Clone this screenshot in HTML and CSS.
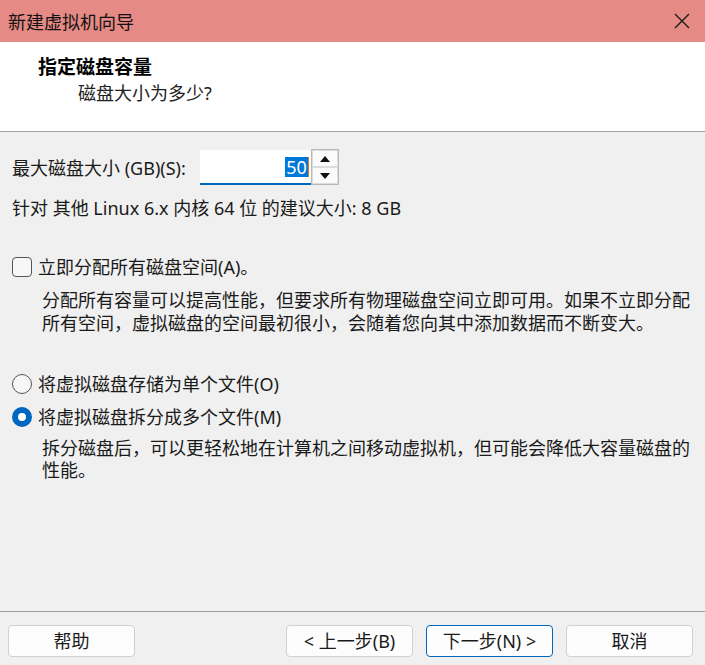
FILE: index.html
```html
<!DOCTYPE html>
<html lang="zh-CN">
<head>
<meta charset="utf-8">
<title>新建虚拟机向导</title>
<link rel="stylesheet" href="styles.css">
</head>
<body>
<div class="window">
  <div class="titlebar">
    <span class="title">新建虚拟机向导</span>
    <svg class="close" width="16" height="16" viewBox="0 0 16 16"><path d="M1 1L15 15M15 1L1 15" stroke="#1a1a1a" stroke-width="1.4" fill="none"/></svg>
  </div>
  <div class="header">
    <div class="h-title">指定磁盘容量</div>
    <div class="h-sub">磁盘大小为多少?</div>
  </div>
  <div class="content">
    <div class="size-row">
      <span class="label">最大磁盘大小 (GB)(S):</span>
      <div class="spinbox">
        <div class="spin-input"><span class="sel">50</span><span class="caret"></span></div>
        <div class="spin-btns">
          <div class="spin-btn"><svg width="10" height="6" viewBox="0 0 10 6"><path d="M5 0L10 6H0Z" fill="#111"/></svg></div>
          <div class="spin-btn"><svg width="10" height="6" viewBox="0 0 10 6"><path d="M0 0H10L5 6Z" fill="#111"/></svg></div>
        </div>
      </div>
    </div>
    <div class="recommend">针对 其他 Linux 6.x 内核 64 位 的建议大小: 8 GB</div>
    <div class="option check-row">
      <span class="checkbox"></span>
      <span>立即分配所有磁盘空间(A)。</span>
    </div>
    <p class="desc desc1">分配所有容量可以提高性能，但要求所有物理磁盘空间立即可用。如果不立即分配<br>所有空间，虚拟磁盘的空间最初很小，会随着您向其中添加数据而不断变大。</p>
    <div class="option radio-row r1">
      <span class="radio"></span>
      <span>将虚拟磁盘存储为单个文件(O)</span>
    </div>
    <div class="option radio-row r2">
      <span class="radio checked"></span>
      <span>将虚拟磁盘拆分成多个文件(M)</span>
    </div>
    <p class="desc desc2">拆分磁盘后，可以更轻松地在计算机之间移动虚拟机，但可能会降低大容量磁盘的<br>性能。</p>
  </div>
  <div class="footer">
    <button class="btn">帮助</button>
    <div class="spacer"></div>
    <button class="btn">&lt; 上一步(B)</button>
    <button class="btn default">下一步(N) &gt;</button>
    <button class="btn">取消</button>
  </div>
</div>
</body>
</html>
```
FILE: styles.css
```css
* { box-sizing: border-box; }
html, body { margin: 0; padding: 0; }
body {
  width: 705px;
  height: 665px;
  overflow: hidden;
  background: #f0f0f0;
  font-family: "Noto Sans", "Noto Sans CJK SC", sans-serif;
  font-size: 18px;
  color: #1a1a1a;
}
.window {
  width: 705px;
  height: 665px;
  display: flex;
  flex-direction: column;
}
.titlebar {
  height: 42px;
  background: #e68a85;
  display: flex;
  align-items: center;
  justify-content: space-between;
  padding: 0 15px 0 8px;
  flex: none;
}
.title { font-size: 18px; color: #111; }
.close { display: block; }
.header {
  height: 90px;
  background: #fff;
  border-bottom: 1px solid #a0a0a0;
  padding-top: 12px;
  flex: none;
}
.h-title {
  font-family: "Noto Sans CJK SC", sans-serif;
  font-weight: bold;
  font-size: 19px;
  line-height: 24px;
  padding-left: 38px;
  color: #000;
}
.h-sub {
  font-family: "Noto Sans", "Noto Sans CJK SC", sans-serif;
  font-size: 18px;
  line-height: 24px;
  padding-left: 78px;
  margin-top: 3px;
  color: #222;
}
.content {
  flex: 1;
  padding: 17px 0 0 12px;
}
.size-row {
  display: flex;
  align-items: center;
  height: 36px;
  gap: 14px;
}
.spinbox {
  display: flex;
  height: 36px;
}
.spin-input {
  width: 111px;
  height: 35px;
  margin-top: 1px;
  background: #fff;
  border-bottom: 2px solid #0067c0;
  display: flex;
  justify-content: flex-end;
  align-items: center;
  padding-right: 2px;
}
.sel {
  background: #0078d7;
  color: #fff;
  font-size: 18px;
  line-height: 20px;
  padding: 0 1px;
}
.caret {
  width: 1px;
  height: 20px;
  background: #e07a20;
}
.spin-btns {
  width: 28px;
  height: 36px;
  border: 1px solid #b8b8b8;
  display: flex;
  flex-direction: column;
  background: #f0f0f0;
}
.spin-btn {
  flex: 1;
  display: flex;
  align-items: center;
  justify-content: center;
  background: #fbfbfb;
  border: 1px solid #dcdcdc;
}
.spin-btn svg { display: block; }
.recommend {
  margin-top: 11px;
  line-height: 24px;
}
.option {
  display: flex;
  align-items: center;
  gap: 6px;
  line-height: 24px;
}
.check-row { margin-top: 35px; }
.checkbox {
  width: 20px;
  height: 20px;
  border: 1px solid #555;
  border-radius: 4px;
  background: #f7f7f7;
  flex: none;
}
.desc {
  margin: 0;
  padding-left: 30px;
  white-space: nowrap;
}
.desc1 { margin-top: 10px; line-height: 23px; }
.r1 { margin-top: 37px; }
.r2 { margin-top: 9px; }
.radio {
  width: 20px;
  height: 20px;
  border: 1px solid #555;
  border-radius: 50%;
  background: #f7f7f7;
  flex: none;
}
.radio.checked {
  border: 6px solid #0067c0;
  background: #fff;
}
.desc2 { margin-top: 8px; line-height: 22px; }
.footer {
  flex: none;
  height: 54px;
  border-top: 1px solid #a0a0a0;
  display: flex;
  align-items: flex-start;
  padding: 13px 12px 0 8px;
  gap: 13px;
  margin-bottom: 0;
}
.spacer { flex: 1; }
.btn {
  width: 127px;
  height: 32px;
  background: #fdfdfd;
  border: 1px solid #d0d0d0;
  border-radius: 4px;
  font-family: "Noto Sans", "Noto Sans CJK SC", sans-serif;
  font-size: 18px;
  color: #1a1a1a;
  padding: 0;
  line-height: 28px;
}
.btn.default { border-color: #0067c0; }
```
